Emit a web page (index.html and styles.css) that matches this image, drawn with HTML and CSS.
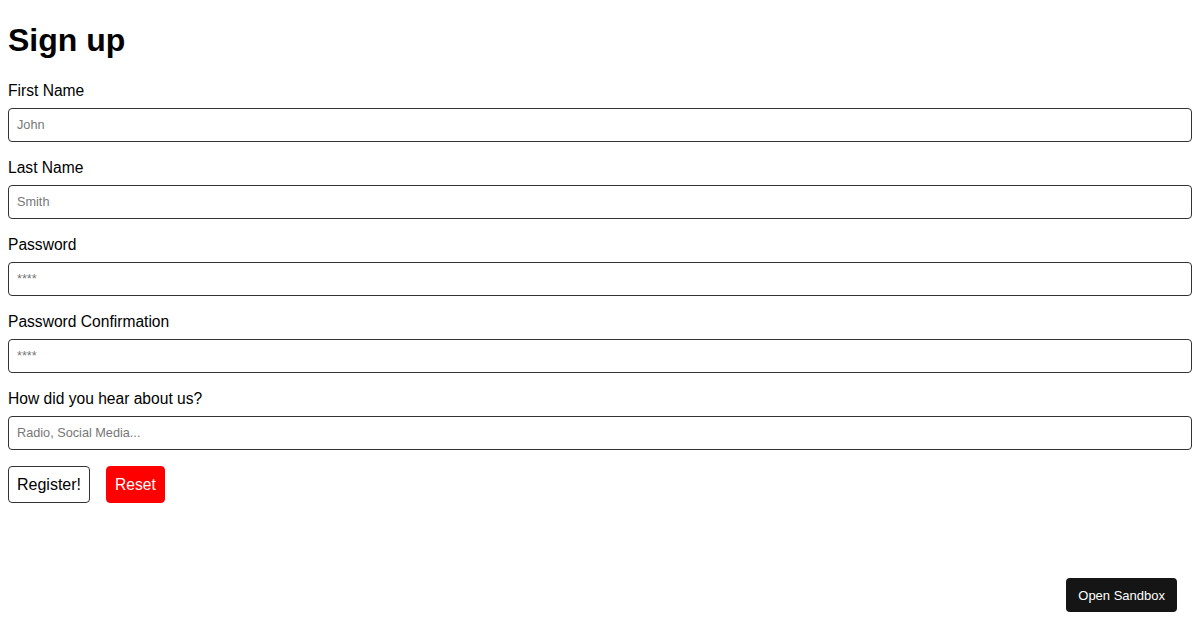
FILE: index.html
```html
<!DOCTYPE html>
<html>
<head>
<meta charset="utf-8">
<link rel="stylesheet" href="styles.css">
</head>
<body>
<h1 class="title">Sign up</h1>
<form class="form">
  <label class="field-label">First Name</label>
  <input class="field-input" type="text" placeholder="John">
  <label class="field-label">Last Name</label>
  <input class="field-input" type="text" placeholder="Smith">
  <label class="field-label">Password</label>
  <input class="field-input" type="text" placeholder="****">
  <label class="field-label">Password Confirmation</label>
  <input class="field-input" type="text" placeholder="****">
  <label class="field-label">How did you hear about us?</label>
  <input class="field-input" type="text" placeholder="Radio, Social Media...">
  <div class="actions">
    <button type="button" class="btn btn-register">Register!</button>
    <button type="button" class="btn btn-reset">Reset</button>
  </div>
</form>
<button type="button" class="sandbox">Open Sandbox</button>
</body>
</html>
```
FILE: styles.css
```css
html, body {
  background: #fff;
}
body {
  margin: 8px;
  font-family: "Liberation Sans", Arial, sans-serif;
  color: #000;
}
.title {
  font-size: 32px;
  font-weight: bold;
  margin: 14px 0 23px;
  line-height: 37px;
}
.form {
  display: flex;
  flex-direction: column;
}
.field-label {
  font-size: 15.6px;
  line-height: 18px;
  margin-bottom: 8px;
}
.field-input {
  box-sizing: border-box;
  height: 34px;
  margin: 0 0 17px;
  padding: 0 8px;
  border: 1px solid #333;
  border-radius: 4px;
  font-family: "Liberation Sans", Arial, sans-serif;
  font-size: 12.7px;
  color: #000;
  outline: none;
}
.field-input::placeholder {
  color: #777;
}
.actions {
  display: flex;
  gap: 16px;
  margin-top: -1px;
}
.btn {
  box-sizing: border-box;
  height: 37px;
  padding: 0 8px;
  font-family: "Liberation Sans", Arial, sans-serif;
  font-size: 16px;
  border-radius: 4px;
  cursor: pointer;
}
.btn-register {
  background: #fff;
  color: #000;
  border: 1px solid #333;
}
.btn-reset {
  background: #ff0000;
  color: #fff;
  border: 1px solid #ff0000;
  font-size: 15.6px;
}
.sandbox {
  position: fixed;
  right: 23px;
  bottom: 18px;
  height: 34px;
  padding: 0 12px;
  background: #151515;
  color: #fff;
  border: none;
  border-radius: 4px;
  font-family: "Liberation Sans", Arial, sans-serif;
  font-size: 13px;
}
```
